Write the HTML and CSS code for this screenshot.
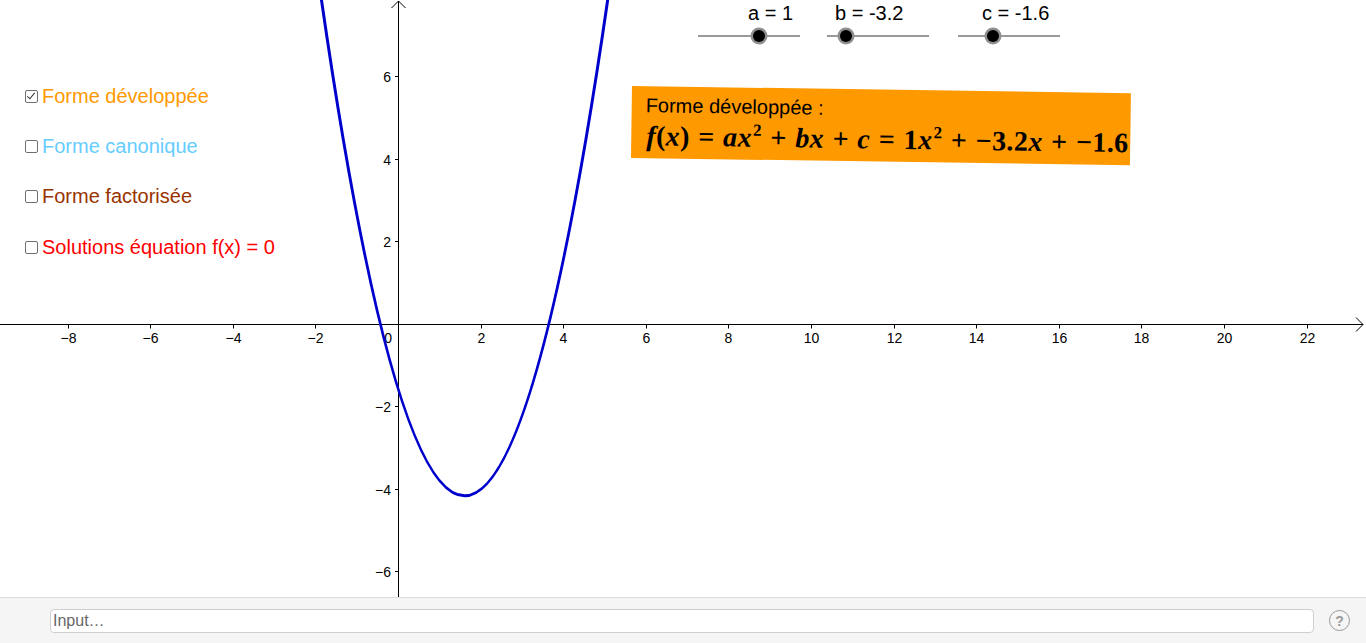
FILE: index.html
```html
<!DOCTYPE html>
<html lang="fr">
<head>
<meta charset="utf-8">
<title>Forme développée</title>
<link rel="stylesheet" href="styles.css">
</head>
<body>
<div class="app">
  <div class="graphics">
    <svg class="plot" width="1366" height="597" viewBox="0 0 1366 597" xmlns="http://www.w3.org/2000/svg">
      <g class="axes" stroke="#000" stroke-width="1" fill="none">
        <line x1="0" y1="324.5" x2="1363" y2="324.5"/>
        <polyline points="1356,317.5 1363,324.5 1356,331.5"/>
        <line x1="398.5" y1="1" x2="398.5" y2="597"/>
        <polyline points="391.5,8 398.5,1 405.5,8"/>
        <path d="M68.5 324.5v4M150.5 324.5v4M233.5 324.5v4M315.5 324.5v4M481.5 324.5v4M563.5 324.5v4M646.5 324.5v4M728.5 324.5v4M811.5 324.5v4M894.5 324.5v4M976.5 324.5v4M1059.5 324.5v4M1141.5 324.5v4M1224.5 324.5v4M1307.5 324.5v4"/>
        <path d="M395 76.5h3.5M395 159.5h3.5M395 241.5h3.5M395 406.5h3.5M395 489.5h3.5M395 571.5h3.5"/>
      </g>
      <g class="xlabels" text-anchor="middle">
        <text x="68.5" y="343">−8</text>
        <text x="150.5" y="343">−6</text>
        <text x="233.5" y="343">−4</text>
        <text x="315.5" y="343">−2</text>
        <text x="392" y="343" text-anchor="end">0</text>
        <text x="481.5" y="343">2</text>
        <text x="563.5" y="343">4</text>
        <text x="646.5" y="343">6</text>
        <text x="728.5" y="343">8</text>
        <text x="811.5" y="343">10</text>
        <text x="894.5" y="343">12</text>
        <text x="976.5" y="343">14</text>
        <text x="1059.5" y="343">16</text>
        <text x="1141.5" y="343">18</text>
        <text x="1224.5" y="343">20</text>
        <text x="1307.5" y="343">22</text>
      </g>
      <g class="ylabels" text-anchor="end">
        <text x="391" y="82">6</text>
        <text x="391" y="165">4</text>
        <text x="391" y="247">2</text>
        <text x="391" y="412">−2</text>
        <text x="391" y="495">−4</text>
        <text x="391" y="577">−6</text>
      </g>
      <path class="curve" d="M315.9 -39.44 Q464.58 1031.06 613.26 -39.44" fill="none" stroke="#0000cc" stroke-width="3"/>
    </svg>

    <ul class="checks">
      <li class="check orange"><span class="box checked"></span>Forme développée</li>
      <li class="check blue"><span class="box"></span>Forme canonique</li>
      <li class="check brown"><span class="box"></span>Forme factorisée</li>
      <li class="check red"><span class="box"></span>Solutions équation f(x) = 0</li>
    </ul>

    <div class="slider slider-a">
      <span class="slabel">a = 1</span>
      <span class="track"><span class="knob" style="left:61px"></span></span>
    </div>
    <div class="slider slider-b">
      <span class="slabel">b = -3.2</span>
      <span class="track"><span class="knob" style="left:19px"></span></span>
    </div>
    <div class="slider slider-c">
      <span class="slabel">c = -1.6</span>
      <span class="track"><span class="knob" style="left:35px"></span></span>
    </div>

    <div class="note">
      <div class="note-title">Forme développée :</div>
      <div class="formula"><i>f</i>(<i>x</i>)<span class="op">=</span><i>ax</i><sup>2</sup><span class="op">+</span><i>bx</i><span class="op">+</span><i>c</i><span class="op">=</span>1<i>x</i><sup>2</sup><span class="op">+</span>−3.2<i>x</i><span class="op">+</span>−1.6</div>
    </div>
  </div>

  <div class="inputbar">
    <div class="input">Input…</div>
    <span class="help">?</span>
  </div>
</div>
</body>
</html>
```
FILE: styles.css
```css
* { box-sizing: border-box; }
html, body {
  margin: 0;
  padding: 0;
  background: #fff;
  font-family: "Liberation Sans", Arial, sans-serif;
  overflow: hidden;
}
.app {
  width: 1366px;
  height: 643px;
  display: flex;
  flex-direction: column;
}
.graphics {
  position: relative;
  height: 597px;
  flex: none;
  overflow: hidden;
}
.plot {
  display: block;
}
.plot text {
  font-family: "Liberation Sans", Arial, sans-serif;
  font-size: 14px;
  fill: #000;
}

/* checkboxes */
.checks {
  position: absolute;
  left: 25px;
  top: 71px;
  margin: 0;
  padding: 0;
  list-style: none;
  display: flex;
  flex-direction: column;
}
.check {
  height: 50.4px;
  display: flex;
  align-items: center;
  gap: 4px;
  font-size: 20px;
}
.box {
  width: 13px;
  height: 13px;
  border: 1.5px solid #6f6f6f;
  border-radius: 2px;
  background: #fff;
  position: relative;
  flex: none;
}
.box.checked::after {
  content: "";
  position: absolute;
  left: 3px;
  top: 0px;
  width: 3px;
  height: 7px;
  border-right: 1.6px solid #333;
  border-bottom: 1.6px solid #333;
  transform: rotate(40deg);
}
.orange { color: #ff9900; }
.blue { color: #66ccff; }
.brown { color: #993300; }
.red { color: #ff0000; }

/* sliders */
.slider {
  position: absolute;
  width: 102px;
  height: 40px;
}
.slider-a { left: 698px; top: 0; }
.slider-b { left: 827px; top: 0; }
.slider-c { left: 958px; top: 0; }
.slabel {
  position: absolute;
  top: 2px;
  font-size: 20px;
  color: #000;
  white-space: nowrap;
}
.slider-a .slabel { left: 50px; }
.slider-b .slabel { left: 8px; }
.slider-c .slabel { left: 24px; }
.track {
  position: absolute;
  left: 0;
  right: 0;
  top: 35px;
  height: 2px;
  background: #9a9a9a;
}
.knob {
  position: absolute;
  top: 1px;
  width: 12px;
  height: 12px;
  margin: -6px 0 0 -6px;
  border-radius: 50%;
  background: #000;
  box-shadow: 0 0 0 2.5px #8f8f8f;
}

/* orange note */
.note {
  position: absolute;
  left: 632px;
  top: 86px;
  width: 499px;
  height: 72px;
  background: #ff9900;
  padding: 7px 0 0 14px;
  transform: rotate(0.82deg);
  transform-origin: 0 0;
  color: #000;
}
.note-title {
  font-size: 20px;
  line-height: 25px;
}
.formula {
  font-family: "Liberation Serif", "Times New Roman", serif;
  font-weight: bold;
  font-size: 28px;
  line-height: 35px;
  letter-spacing: 0.4px;
  white-space: nowrap;
  margin-left: 1px;
}
.formula i {
  font-style: italic;
}
.formula sup {
  font-size: 17px;
  line-height: 0;
  vertical-align: 11px;
  margin-left: 1px;
}
.formula .op {
  margin: 0 8.5px;
}

/* input bar */
.inputbar {
  flex: 1;
  background: #f5f5f5;
  border-top: 1px solid #dcdcdc;
  display: flex;
  align-items: center;
  padding: 0 0 0 50px;
  gap: 15px;
}
.input {
  width: 1264px;
  height: 24px;
  background: #fff;
  border: 1px solid #cfcfcf;
  border-radius: 4px;
  padding: 0 2px;
  font-size: 16px;
  line-height: 22px;
  color: #666;
}
.help {
  width: 21px;
  height: 21px;
  border: 1.6px solid #9a9a9a;
  border-radius: 50%;
  display: flex;
  align-items: center;
  justify-content: center;
  font-size: 14px;
  font-weight: bold;
  color: #9a9a9a;
  flex: none;
}
```
